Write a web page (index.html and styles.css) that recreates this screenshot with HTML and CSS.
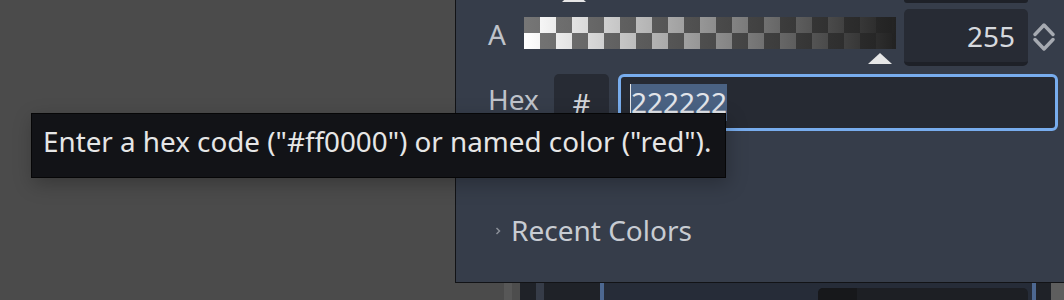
FILE: index.html
```html
<!DOCTYPE html>
<html lang="en">
<head>
    <meta charset="UTF-8">
    <title>Color picker - hex tooltip</title>
    <link rel="stylesheet" href="styles.css">
</head>
<body>
    <!-- Panel inferior del editor (debajo del popup) -->
    <div class="dock-strip">
        <div class="seg seg-light"></div>
        <div class="seg seg-gray"></div>
        <div class="seg seg-dark w16"></div>
        <div class="seg seg-base"></div>
        <div class="seg seg-dark w56"></div>
        <div class="seg seg-blue"></div>
        <div class="seg seg-field">
            <div class="field-pill"><span class="pill-knob"></span></div>
        </div>
        <div class="seg seg-blue"></div>
        <div class="seg seg-dark w15"></div>
        <div class="seg seg-scroll"></div>
    </div>

    <!-- Popup del selector de color -->
    <div class="picker">
        <!-- Fila anterior (recortada arriba) -->
        <div class="cut-row">
            <span class="handle cut-handle"></span>
            <span class="cut-spin"></span>
        </div>

        <!-- Fila alpha -->
        <div class="row">
            <span class="label label-a">A</span>
            <div class="slider">
                <span class="handle slider-handle"></span>
            </div>
            <div class="spinbox">255</div>
            <svg class="arrows" viewBox="0 0 22 30">
                <path d="M2 12.5 L11 3 L20 12.5 M2 17.5 L11 27 L20 17.5" />
            </svg>
        </div>

        <!-- Fila hex -->
        <div class="row row-hex">
            <span class="label label-hex">Hex</span>
            <div class="hash-btn">#</div>
            <div class="hex-input"><span class="sel">222222</span></div>
        </div>

        <!-- Colores recientes -->
        <div class="recent">
            <svg class="chevron" viewBox="0 0 8 10">
                <path d="M2.5 2 L5.5 5 L2.5 8" />
            </svg>
            <span>Recent Colors</span>
        </div>
    </div>

    <!-- Tooltip -->
    <div class="tooltip">Enter a hex code ("#ff0000") or named color ("red").</div>
</body>
</html>
```

FILE: styles.css
```css
/* Estilos generales */
body {
    margin: 0;
    width: 1064px;
    height: 300px;
    overflow: hidden;
    position: relative;
    background-color: #4b4b4b;
    font-family: 'Noto Sans', 'Open Sans', sans-serif;
    font-size: 28px;
}

/* Franja del editor bajo el popup */
.dock-strip {
    display: flex;
    height: 17px;
    margin-top: 283px;
    padding-left: 504px;
}

.seg {
    height: 100%;
    flex: none;
}

.seg-light { width: 8px; background-color: #575757; }
.seg-gray { width: 8px; background-color: #4d4d4d; }
.seg-dark { background-color: #1f2228; }
.seg-base { width: 8px; background-color: #363c48; }
.seg-blue { width: 4px; background-color: #4d6891; }
.w16 { width: 16px; }
.w56 { width: 56px; }
.w15 { width: 15px; }
.seg-scroll { width: 14px; background-color: #5e5e5e; }

.seg-field {
    width: 428px;
    background-color: #262c38;
    padding: 5px 0 0 214px;
    box-sizing: border-box;
}

.field-pill {
    display: flex;
    width: 210px;
    height: 12px;
    background-color: #1d1f24;
    border-radius: 5px 5px 0 0;
    overflow: hidden;
}

.pill-knob {
    width: 39px;
    background-color: #17181b;
}

/* Popup */
.picker {
    position: absolute;
    left: 455px;
    top: 0;
    right: 0;
    height: 283px;
    box-sizing: border-box;
    padding-left: 32px;
    background-color: #363d4a;
    border-left: 1px solid #121316;
    border-bottom: 1px solid #121316;
}

.cut-row {
    position: relative;
    height: 3px;
    overflow: hidden;
}

.handle {
    position: absolute;
    width: 0;
    height: 0;
    border-left: 12px solid transparent;
    border-right: 12px solid transparent;
    border-bottom: 11px solid #e6e6e6;
}

.cut-handle {
    left: 74px;
    top: -9px;
}

.cut-spin {
    position: absolute;
    left: 416px;
    top: 0;
    width: 124px;
    height: 3px;
    background-color: #1e2128;
    border-radius: 0 0 4px 4px;
}

.row {
    display: flex;
    align-items: flex-start;
    height: 57px;
    margin-top: 6px;
}

.row-hex {
    margin-top: 8px;
}

.label {
    color: #bfc3ca;
    line-height: 38px;
    margin-top: 6px;
}

.label-a { width: 36px; }
.label-hex { width: 66px; }

/* Barra de alpha sobre cuadriculado */
.slider {
    position: relative;
    width: 372px;
    height: 32px;
    margin: 8px 8px 0 0;
    background:
        linear-gradient(to right, rgba(34, 34, 34, 0), rgba(34, 34, 34, 1)),
        repeating-conic-gradient(#ffffff 0% 25%, #767676 0% 50%) 0 0 / 32px 32px;
}

.slider-handle {
    left: 344px;
    top: 36px;
}

.spinbox {
    width: 124px;
    height: 57px;
    box-sizing: border-box;
    padding: 8px 13px 0 0;
    text-align: right;
    line-height: 38px;
    color: #d6d9de;
    background-color: #272b34;
    border-radius: 5px;
    border-bottom: 4px solid #1e2128;
}

.arrows {
    width: 22px;
    height: 30px;
    margin: 13px 0 0 5px;
    fill: none;
    stroke: #a6aab1;
    stroke-width: 3.4;
    stroke-linecap: round;
    stroke-linejoin: round;
}

.hash-btn {
    width: 55px;
    height: 57px;
    margin-right: 9px;
    display: flex;
    justify-content: center;
    align-items: center;
    color: #d3d6db;
    background-color: #272b34;
    border-radius: 5px;
}

.hex-input {
    width: 440px;
    height: 57px;
    box-sizing: border-box;
    display: flex;
    align-items: center;
    padding-left: 10px;
    background-color: #262a33;
    border: 3px solid #78adee;
    border-radius: 6px;
}

.sel {
    display: inline-block;
    line-height: 37px;
    color: #e2e5ea;
    background-color: #4a6283;
    box-shadow: -1px 0 0 #e6e6e6;
}

/* Colores recientes */
.recent {
    display: flex;
    align-items: center;
    margin-top: 80px;
    line-height: 38px;
    color: #c8ccd2;
}

.chevron {
    width: 8px;
    height: 10px;
    margin: 2px 9px 0 6px;
    fill: none;
    stroke: #8a8f98;
    stroke-width: 1.5;
}

/* Tooltip */
.tooltip {
    position: absolute;
    left: 31px;
    top: 113px;
    width: 695px;
    height: 65px;
    box-sizing: border-box;
    padding: 8px 0 0 11px;
    line-height: 38px;
    font-size: 27.8px;
    color: #e6e6e6;
    background-color: #121317;
    border: 1px solid #060607;
    box-shadow: 2px 6px 18px rgba(0, 0, 0, 0.25);
    white-space: nowrap;
}
```
